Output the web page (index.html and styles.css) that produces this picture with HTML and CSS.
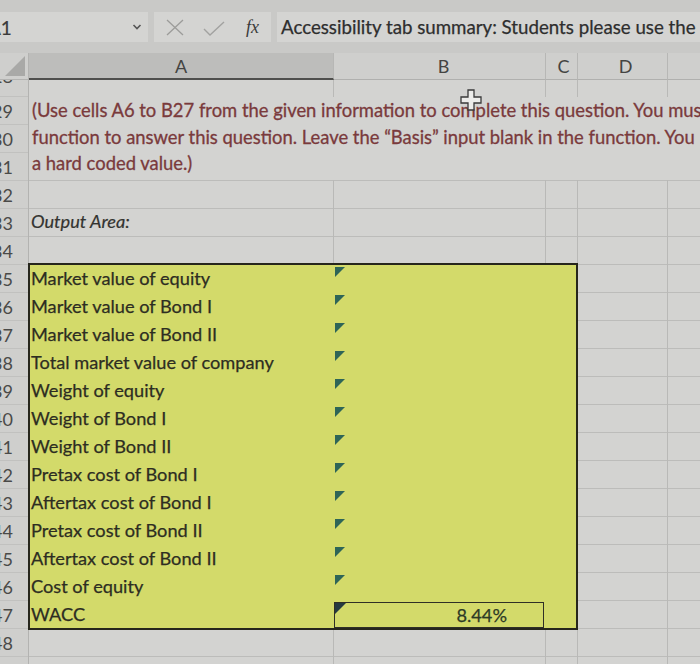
FILE: index.html
```html
<!DOCTYPE html>
<html>
<head>
<meta charset="utf-8">
<link rel="stylesheet" href="styles.css">
</head>
<body>
<div class="app">
  <div class="fbar">
    <div class="namebox">
      <span class="ref">A1</span>
      <svg class="chev" width="10" height="6" viewBox="0 0 10 6"><path d="M1.5 1 L5 4.5 L8.5 1" fill="none" stroke="#555" stroke-width="1.6"/></svg>
    </div>
    <div class="fbtns">
      <svg class="ico-x" width="18" height="17" viewBox="0 0 18 17"><path d="M1 1 L17 16 M17 1 L1 16" fill="none" stroke="#9c9c9a" stroke-width="1.3"/></svg>
      <svg class="ico-ok" width="22" height="15" viewBox="0 0 22 15"><path d="M1 8 L7 14 L21 1" fill="none" stroke="#a2a2a0" stroke-width="1.4"/></svg>
      <span class="fx">fx</span>
    </div>
    <div class="ftext">Accessibility tab summary: Students please use the</div>
  </div>

  <div class="colheads">
    <div class="corner"><svg width="20" height="20" viewBox="0 0 20 20"><path d="M20 0 L20 20 L0 20 Z" fill="#a9a9a7"/></svg></div>
    <div class="ch ch-a">A</div>
    <div class="ch ch-b">B</div>
    <div class="ch ch-c">C</div>
    <div class="ch ch-d">D</div>
    <div class="ch ch-e"></div>
  </div>

  <div class="sheet">
    <div class="rowheads">
      <div class="rh rh-first"><span>28</span></div>
      <div class="rh"><span>29</span></div>
      <div class="rh"><span>30</span></div>
      <div class="rh"><span>31</span></div>
      <div class="rh"><span>32</span></div>
      <div class="rh"><span>33</span></div>
      <div class="rh"><span>34</span></div>
      <div class="rh"><span>35</span></div>
      <div class="rh"><span>36</span></div>
      <div class="rh"><span>37</span></div>
      <div class="rh"><span>38</span></div>
      <div class="rh"><span>39</span></div>
      <div class="rh"><span>40</span></div>
      <div class="rh"><span>41</span></div>
      <div class="rh"><span>42</span></div>
      <div class="rh"><span>43</span></div>
      <div class="rh"><span>44</span></div>
      <div class="rh"><span>45</span></div>
      <div class="rh"><span>46</span></div>
      <div class="rh"><span>47</span></div>
      <div class="rh"><span>48</span></div>
      <div class="rh"><span>49</span></div>
    </div>

    <div class="cells">
      <div class="merged">(Use cells A6 to B27 from the given information to complete this question. You must use the<br>function to answer this question. Leave the “Basis” input blank in the function. You must not use<br>a hard coded value.)</div>
      <div class="output-title">Output Area:</div>

      <div class="box">
        <div class="brow"><div class="lab">Market value of equity</div><div class="val tri"></div></div>
        <div class="brow"><div class="lab">Market value of Bond I</div><div class="val tri"></div></div>
        <div class="brow"><div class="lab">Market value of Bond II</div><div class="val tri"></div></div>
        <div class="brow"><div class="lab">Total market value of company</div><div class="val tri"></div></div>
        <div class="brow"><div class="lab">Weight of equity</div><div class="val tri"></div></div>
        <div class="brow"><div class="lab">Weight of Bond I</div><div class="val tri"></div></div>
        <div class="brow"><div class="lab">Weight of Bond II</div><div class="val tri"></div></div>
        <div class="brow"><div class="lab">Pretax cost of Bond I</div><div class="val tri"></div></div>
        <div class="brow"><div class="lab">Aftertax cost of Bond I</div><div class="val tri"></div></div>
        <div class="brow"><div class="lab">Pretax cost of Bond II</div><div class="val tri"></div></div>
        <div class="brow"><div class="lab">Aftertax cost of Bond II</div><div class="val tri"></div></div>
        <div class="brow"><div class="lab">Cost of equity</div><div class="val tri"></div></div>
        <div class="brow"><div class="lab">WACC</div><div class="val tri wacc">8.44%</div></div>
      </div>
    </div>
  </div>

  <svg class="cursor" width="22" height="22" viewBox="0 0 22 22"><path d="M8 1 H14 V8 H21 V14 H14 V21 H8 V14 H1 V8 H8 Z" fill="#ececea" stroke="#3a3a3a" stroke-width="1.3"/></svg>
</div>
</body>
</html>
```

FILE: styles.css
```css
* { box-sizing: border-box; }
html, body { margin: 0; padding: 0; }
body {
  width: 700px;
  height: 664px;
  overflow: hidden;
  background: #d2d2d0;
  font-family: "Lato", "Liberation Sans", sans-serif;
}
.app {
  position: relative;
  width: 700px;
  height: 664px;
  overflow: hidden;
}

/* formula bar */
.fbar {
  height: 53px;
  background: #c9c9c7;
  display: flex;
  align-items: flex-start;
  padding-top: 12px;
  gap: 6px;
}
.namebox {
  width: 150px;
  height: 30px;
  margin-left: -2px;
  background: #d4d4d2;
  display: flex;
  align-items: center;
  justify-content: space-between;
  padding-right: 6px;
  overflow: hidden;
}
.ref {
  font-size: 19px;
  color: #3a3a3a;
  margin-left: -10px;
  -webkit-text-stroke: 0.2px #3a3a3a;
}
.fbtns {
  width: 117px;
  height: 30px;
  background: #d4d4d2;
  display: flex;
  align-items: center;
  padding-left: 12px;
}
.ico-x { margin-right: 19px; }
.ico-ok { margin-right: 21px; margin-top: 2px; }
.fx {
  font-family: "Liberation Serif", serif;
  font-style: italic;
  font-size: 18px;
  color: #3a3a3a;
}
.ftext {
  flex: 1;
  height: 30px;
  background: #d4d4d2;
  padding-left: 4px;
  font-size: 18.7px;
  line-height: 30px;
  color: #2e2e2e;
  -webkit-text-stroke: 0.25px #2e2e2e;
  white-space: nowrap;
  overflow: hidden;
}

/* column headers */
.colheads {
  height: 27px;
  display: flex;
  background: #cfcfcd;
}
.corner {
  width: 29px;
  display: flex;
  align-items: flex-end;
  justify-content: flex-end;
  padding: 0 3px 3px 0;
  border-right: 1px solid #b3b3b1;
  border-bottom: 1px solid #b3b3b1;
}
.ch {
  display: flex;
  align-items: center;
  justify-content: center;
  font-size: 18px;
  color: #444442;
  border-right: 1px solid #b7b7b5;
  border-bottom: 1px solid #b0b0ae;
}
.ch-a { width: 305px; background: #bdbdbb; border-bottom: 2px solid #4f4f4d; }
.ch-b { width: 212px; padding-left: 8px; }
.ch-c { width: 32px; padding-left: 4px; }
.ch-d { width: 90px; padding-left: 6px; }
.ch-e { flex: 1; border-right: none; }

/* sheet */
.sheet {
  display: flex;
}
.rowheads {
  width: 29px;
  flex: none;
  background: #cfcfcd;
  border-right: 1px solid #b3b3b1;
}
.rh {
  height: 28px;
  display: flex;
  justify-content: flex-end;
  align-items: center;
  padding-right: 15px;
  overflow: hidden;
  font-size: 18px;
  color: #4a4a48;
  border-bottom: 1px solid #c1c1bf;
}
.rh span { white-space: nowrap; }
.rh-first {
  height: 17px;
  align-items: flex-end;
}
.rh-first span { line-height: 28px; margin-bottom: 6px; }

.cells {
  flex: 1;
  display: grid;
  grid-template-columns: 305px 212px 32px 90px 1fr;
  grid-template-rows: 17px repeat(21, 28px);
  background-color: #d3d3d1;
  background-image:
    linear-gradient(#b9b9b7, #b9b9b7),
    linear-gradient(#b9b9b7, #b9b9b7),
    linear-gradient(#b9b9b7, #b9b9b7),
    linear-gradient(#b9b9b7, #b9b9b7),
    repeating-linear-gradient(to bottom, transparent 0 27px, #bcbcba 27px 28px);
  background-size: 1px 100%, 1px 100%, 1px 100%, 1px 100%, 100% 100%;
  background-position: 304px 0, 516px 0, 548px 0, 638px 0, 0 17px;
  background-repeat: no-repeat, no-repeat, no-repeat, no-repeat, repeat;
}
.merged {
  grid-row: 2 / 5;
  grid-column: 1 / 6;
  background: #d3d3d1;
  padding: 0 0 0 3px;
  font-size: 18.4px;
  line-height: 26.5px;
  color: #7a3a3c;
  -webkit-text-stroke: 0.3px #7a3a3c;
  white-space: nowrap;
  overflow: hidden;
  margin-bottom: 1px;
}
.output-title {
  grid-row: 6;
  grid-column: 1;
  font-style: italic;
  font-size: 18.2px;
  color: #333330;
  -webkit-text-stroke: 0.2px #333330;
  padding: 0 0 5px 2px;
  display: flex;
  align-items: center;
}

/* yellow output box */
.box {
  grid-row: 8 / 21;
  grid-column: 1 / 4;
  background: #d3da6a;
  outline: 2px solid #26261c;
  outline-offset: -1px;
  display: flex;
  flex-direction: column;
  margin-top: -1px;
  margin-right: 1px;
}
.brow {
  height: 28px;
  display: grid;
  grid-template-columns: 305px 210px;
}
.lab {
  font-size: 18.2px;
  color: #2d2d22;
  -webkit-text-stroke: 0.25px #2d2d22;
  padding-left: 2px;
  display: flex;
  align-items: center;
  white-space: nowrap;
}
.val {
  position: relative;
}
.tri::before {
  content: "";
  position: absolute;
  left: 1px;
  top: 3px;
  width: 0;
  height: 0;
  border-top: 10px solid #2e6557;
  border-right: 10px solid transparent;
}
.wacc {
  border: 1px solid #2f2f26;
  display: flex;
  align-items: center;
  justify-content: flex-end;
  padding-right: 36px;
  font-size: 18.2px;
  color: #2d3a26;
  -webkit-text-stroke: 0.25px #2d3a26;
  margin-top: 2px;
}
.wacc::before {
  left: 0;
  top: 0;
  border-top-width: 11px;
  border-right-width: 11px;
  border-top-color: #253a40;
}

.cursor {
  position: absolute;
  left: 460px;
  top: 89px;
}
```
